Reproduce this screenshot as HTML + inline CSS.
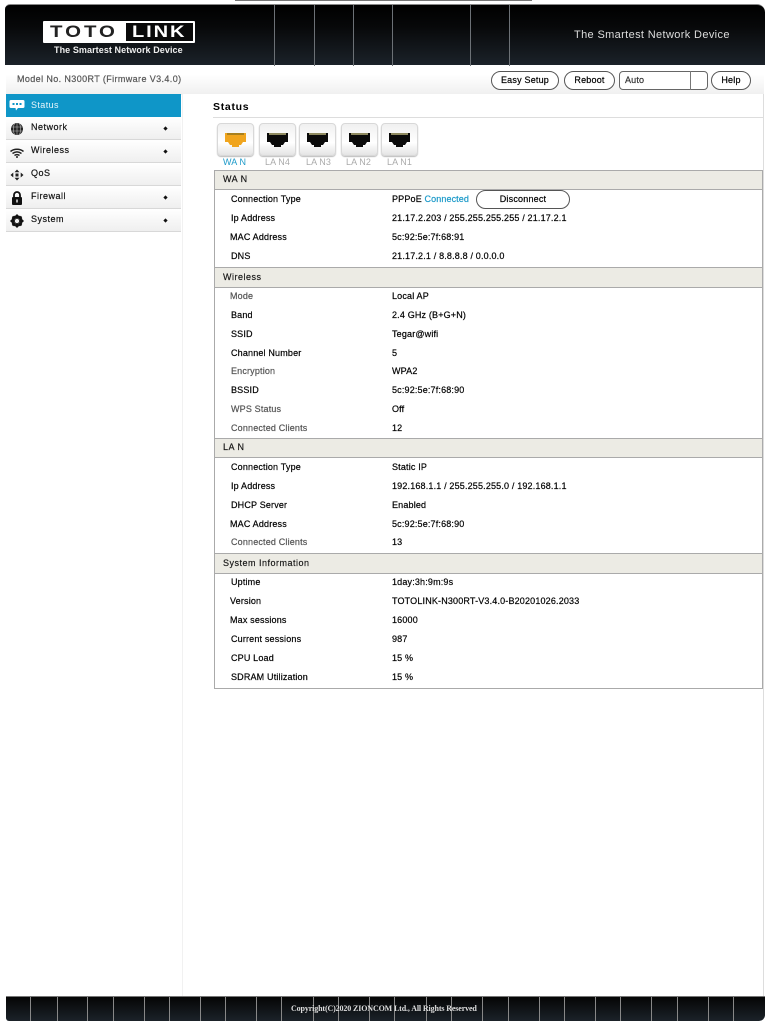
<!DOCTYPE html>
<html>
<head>
<meta charset="utf-8">
<title>TOTOLINK Status</title>
<style>
html,body{margin:0;padding:0;width:768px;height:1024px;overflow:hidden;background:#fff;}
body{position:relative;font-family:"Liberation Sans",Arial,sans-serif;font-size:9px;color:#000;}
.a{position:absolute;}
.t{position:absolute;white-space:nowrap;line-height:12px;height:12px;letter-spacing:.17px;filter:blur(.3px);-webkit-text-stroke:.2px currentColor;}
.g{color:#555;}
.v{position:absolute;width:1px;background:#6c7176;}
#hdr{left:5px;top:4px;width:760px;height:61px;background:linear-gradient(#000 0,#070809 35%,#1b2229 100%);border-radius:5px 8px 0 0;border-top:1px solid #888;box-sizing:border-box;}
#ftr{left:6px;top:996px;width:759px;height:25px;background:linear-gradient(#050505,#1b2229);border-radius:0 0 6px 3px;border-top:1px solid #777;box-sizing:border-box;}
.btn{position:absolute;height:19px;box-sizing:border-box;border:1px solid #555;border-radius:10px;background:#fff;text-align:center;line-height:16px;font-size:9px;letter-spacing:.2px;filter:blur(.3px);-webkit-text-stroke:.2px #000;}
.mi{position:absolute;left:6px;width:175px;height:22px;background:linear-gradient(#fff,#efefef);border-bottom:1px solid #d8d8d8;box-sizing:content-box;}
.mi .n{position:absolute;left:25px;top:3px;line-height:14px;letter-spacing:.5px;color:#111;filter:blur(.3px);-webkit-text-stroke:.2px currentColor;}
.mi .d{position:absolute;left:158px;top:10px;width:3px;height:3px;background:#111;transform:rotate(45deg);}
.mi svg{position:absolute;left:1px;top:2px;}
.port{position:absolute;top:123px;width:37px;height:33px;box-sizing:border-box;border:1px solid #d8d8d8;border-radius:4px;background:linear-gradient(#f0f0f0,#fff 60%,#e4e4e4);box-shadow:0 1px 1px #bbb;}
.port svg{position:absolute;left:7px;top:8px;}
.pl{position:absolute;top:156px;line-height:12px;font-size:9px;color:#aaa;letter-spacing:.1px;filter:blur(.3px);}
.sec{position:absolute;left:215px;width:547px;background:#ecebe4;border-top:1px solid #aaa;border-bottom:1px solid #aaa;box-sizing:border-box;}
.sec span{position:absolute;left:8px;top:50%;margin-top:-7px;line-height:12px;letter-spacing:.5px;color:#111;white-space:nowrap;filter:blur(.3px);-webkit-text-stroke:.15px #111;}
</style>
</head>
<body>
<div class="a" style="left:235px;top:0;width:297px;height:1px;background:#777;"></div>

<div class="a" id="hdr"></div>
<div class="v" style="left:274px;top:5px;height:61px;"></div>
<div class="v" style="left:314px;top:5px;height:61px;"></div>
<div class="v" style="left:353px;top:5px;height:61px;"></div>
<div class="v" style="left:392px;top:5px;height:61px;"></div>
<div class="v" style="left:470px;top:5px;height:61px;"></div>
<div class="v" style="left:509px;top:5px;height:61px;"></div>

<div class="a" style="left:43px;top:21px;width:152px;height:22px;background:#fff;border-radius:1px;"></div>
<div class="a" style="left:126px;top:23px;width:67px;height:18px;background:#0a0a0a;"></div>
<div class="a" style="left:50px;top:20px;line-height:24px;font-size:17px;font-weight:bold;color:#222;letter-spacing:2.5px;white-space:nowrap;transform:scaleX(1.2);transform-origin:left;">TOTO</div>
<div class="a" style="left:132px;top:20px;line-height:24px;font-size:17px;font-weight:bold;color:#fff;letter-spacing:1.6px;white-space:nowrap;transform:scaleX(1.18);transform-origin:left;">LINK</div>
<div class="t" style="left:54px;top:44px;color:#eee;font-weight:bold;font-size:9px;letter-spacing:.08px;-webkit-text-stroke:0;">The Smartest Network Device</div>
<div class="t" style="left:574px;top:29px;color:#ddd;font-size:11px;letter-spacing:.36px;-webkit-text-stroke:0;">The Smartest Network Device</div>

<div class="a" style="left:6px;top:66px;width:758px;height:28px;background:linear-gradient(#fff 30%,#f0f0f0);"></div>
<div class="t" style="left:17px;top:73px;color:#555;letter-spacing:.39px;">Model No. N300RT (Firmware V3.4.0)</div>
<div class="btn" style="left:491px;top:71px;width:68px;">Easy Setup</div>
<div class="btn" style="left:564px;top:71px;width:51px;line-height:17px;">Reboot</div>
<div class="a" style="left:619px;top:71px;width:89px;height:19px;box-sizing:border-box;border:1px solid #666;border-radius:4px;background:#fff;"></div>
<div class="a" style="left:690px;top:71px;width:1px;height:19px;background:#777;"></div>
<div class="t" style="left:625px;top:74px;color:#333;">Auto</div>
<div class="btn" style="left:711px;top:71px;width:40px;line-height:17px;">Help</div>

<div class="a" style="left:182px;top:94px;width:1px;height:902px;background:#f1f1f1;"></div>
<div class="a" style="left:763px;top:94px;width:1px;height:902px;background:#ddd;"></div>
<div class="a" style="left:6px;top:94px;width:176px;height:1px;background:#eee;"></div>

<div class="mi" style="top:94px;height:23px;background:#0f96c8;border:0;">
<svg width="20" height="18" viewBox="0 0 20 18"><path d="M4 4h12a1.500 1.500 0 0 1 1.500 1.500v5a1.500 1.500 0 0 1-1.500 1.500h-5l-2 2.500-.5-2.500H4a1.500 1.500 0 0 1-1.500-1.500v-5A1.500 1.500 0 0 1 4 4z" fill="#fff"/><rect x="5.500" y="7" width="2" height="2" fill="#0f96c8"/><rect x="9" y="7" width="2" height="2" fill="#0f96c8"/><rect x="12.500" y="7" width="2" height="2" fill="#0f96c8"/></svg>
<div class="n" style="color:#e8f6fb;top:4px;-webkit-text-stroke:0;letter-spacing:.4px;">Status</div></div>

<div class="mi" style="top:117px;">
<svg width="20" height="20" viewBox="0 0 20 20"><circle cx="10" cy="10" r="6" fill="#222"/><path d="M4 8h12M4 12h12M10 4v12M7.500 4.500c-1.500 3-1.500 8 0 11M12.500 4.500c1.500 3 1.500 8 0 11" stroke="#bbb" stroke-width=".6" fill="none"/></svg>
<div class="n">Network</div><div class="d"></div></div>

<div class="mi" style="top:140px;">
<svg width="20" height="20" viewBox="0 0 20 20"><path d="M3.500 9.500C7 6.500 13 6.500 16.500 9.500M5.500 11.500c3-2.200 6-2.200 9 0M7.500 13.500c1.700-1.200 3.300-1.200 5 0" stroke="#222" stroke-width="1.500" fill="none"/><circle cx="10" cy="15" r="1" fill="#222"/></svg>
<div class="n">Wireless</div><div class="d"></div></div>

<div class="mi" style="top:163px;">
<svg width="20" height="20" viewBox="0 0 20 20"><path d="M10 4.500l2.500 2.800h-5zM10 15.500l2.500-2.800h-5zM3.500 10l2.800-2.500v5zM16.500 10l-2.800-2.500v5z" fill="#222"/><rect x="8.500" y="8.500" width="3" height="3" fill="#222"/></svg>
<div class="n">QoS</div></div>

<div class="mi" style="top:186px;">
<svg width="20" height="20" viewBox="0 0 20 20"><rect x="5" y="9" width="10" height="8" rx="1" fill="#111"/><path d="M7 9.500V7a3 3 0 0 1 6 0v2.500" stroke="#111" stroke-width="1.800" fill="none"/><rect x="9.200" y="11.500" width="1.600" height="3" fill="#ddd"/></svg>
<div class="n">Firewall</div><div class="d"></div></div>

<div class="mi" style="top:209px;">
<svg width="20" height="20" viewBox="0 0 20 20"><circle cx="10" cy="10" r="4.500" fill="none" stroke="#111" stroke-width="2.400"/><path d="M10 3.500v13M3.500 10h13M5.500 5.500l9 9M14.500 5.500l-9 9" stroke="#111" stroke-width="2"/><circle cx="10" cy="10" r="2.200" fill="#eee"/></svg>
<div class="n">System</div><div class="d"></div></div>

<div class="t" style="left:213px;top:101px;font-weight:bold;font-size:10.500px;letter-spacing:.7px;-webkit-text-stroke:0;">Status</div>
<div class="a" style="left:213px;top:117px;width:550px;height:1px;background:#ddd;"></div>

<div class="port" style="left:217px;"><svg width="21" height="16" viewBox="0 0 21 16"><path d="M0 1h21v9h-3l-2 3h-2v2H7v-2H5l-2-3H0z" fill="#f0a51e"/><rect x="2" y="1" width="17" height="2" fill="#a8801e"/></svg></div>
<div class="port" style="left:259px;"><svg width="21" height="16" viewBox="0 0 21 16"><path d="M0 1h21v9h-3l-2 3h-2v2H7v-2H5l-2-3H0z" fill="#0a0a0a"/><rect x="2" y="1" width="17" height="2" fill="#8f8a60"/></svg></div>
<div class="port" style="left:299px;"><svg width="21" height="16" viewBox="0 0 21 16"><path d="M0 1h21v9h-3l-2 3h-2v2H7v-2H5l-2-3H0z" fill="#0a0a0a"/><rect x="2" y="1" width="17" height="2" fill="#8f8a60"/></svg></div>
<div class="port" style="left:341px;"><svg width="21" height="16" viewBox="0 0 21 16"><path d="M0 1h21v9h-3l-2 3h-2v2H7v-2H5l-2-3H0z" fill="#0a0a0a"/><rect x="2" y="1" width="17" height="2" fill="#8f8a60"/></svg></div>
<div class="port" style="left:381px;"><svg width="21" height="16" viewBox="0 0 21 16"><path d="M0 1h21v9h-3l-2 3h-2v2H7v-2H5l-2-3H0z" fill="#0a0a0a"/><rect x="2" y="1" width="17" height="2" fill="#8f8a60"/></svg></div>
<div class="pl" style="left:223px;color:#1d9ac9;">WA N</div>
<div class="pl" style="left:265px;">LA N4</div>
<div class="pl" style="left:306px;">LA N3</div>
<div class="pl" style="left:346px;">LA N2</div>
<div class="pl" style="left:387px;">LA N1</div>

<div class="a" style="left:214px;top:170px;width:549px;height:519px;box-sizing:border-box;border:1px solid #aaa;"></div>
<div class="sec" style="top:170px;height:20px;"><span>WA N</span></div>
<div class="sec" style="top:267px;height:21px;"><span>Wireless</span></div>
<div class="sec" style="top:438px;height:20px;"><span>LA N</span></div>
<div class="sec" style="top:553px;height:21px;"><span>System Information</span></div>

<div class="t" style="left:231px;top:193px;">Connection Type</div>
<div class="t" style="left:392px;top:193px;">PPPoE <span style="color:#1d9ac9;letter-spacing:.1px;">Connected</span></div>
<div class="btn" style="left:476px;top:190px;width:94px;line-height:17px;">Disconnect</div>
<div class="t" style="left:231px;top:212px;">Ip Address</div>
<div class="t" style="left:392px;top:212px;">21.17.2.203 / 255.255.255.255 / 21.17.2.1</div>
<div class="t" style="left:230px;top:231px;">MAC Address</div>
<div class="t" style="left:392px;top:231px;">5c:92:5e:7f:68:91</div>
<div class="t" style="left:231px;top:250px;">DNS</div>
<div class="t" style="left:392px;top:250px;">21.17.2.1 / 8.8.8.8 / 0.0.0.0</div>

<div class="t g" style="left:230px;top:290px;">Mode</div>
<div class="t" style="left:392px;top:290px;">Local AP</div>
<div class="t" style="left:231px;top:309px;">Band</div>
<div class="t" style="left:392px;top:309px;">2.4 GHz (B+G+N)</div>
<div class="t" style="left:231px;top:328px;">SSID</div>
<div class="t" style="left:392px;top:328px;">Tegar@wifi</div>
<div class="t" style="left:231px;top:347px;">Channel Number</div>
<div class="t" style="left:392px;top:347px;">5</div>
<div class="t g" style="left:231px;top:365px;">Encryption</div>
<div class="t" style="left:392px;top:365px;">WPA2</div>
<div class="t" style="left:231px;top:384px;">BSSID</div>
<div class="t" style="left:392px;top:384px;">5c:92:5e:7f:68:90</div>
<div class="t g" style="left:231px;top:403px;">WPS Status</div>
<div class="t" style="left:392px;top:403px;">Off</div>
<div class="t g" style="left:231px;top:422px;">Connected Clients</div>
<div class="t" style="left:392px;top:422px;">12</div>

<div class="t" style="left:231px;top:461px;">Connection Type</div>
<div class="t" style="left:392px;top:461px;">Static IP</div>
<div class="t" style="left:231px;top:480px;">Ip Address</div>
<div class="t" style="left:392px;top:480px;">192.168.1.1 / 255.255.255.0 / 192.168.1.1</div>
<div class="t" style="left:231px;top:499px;">DHCP Server</div>
<div class="t" style="left:392px;top:499px;">Enabled</div>
<div class="t" style="left:230px;top:518px;">MAC Address</div>
<div class="t" style="left:392px;top:518px;">5c:92:5e:7f:68:90</div>
<div class="t g" style="left:231px;top:536px;">Connected Clients</div>
<div class="t" style="left:392px;top:536px;">13</div>

<div class="t" style="left:231px;top:576px;">Uptime</div>
<div class="t" style="left:392px;top:576px;">1day:3h:9m:9s</div>
<div class="t" style="left:230px;top:595px;">Version</div>
<div class="t" style="left:392px;top:595px;">TOTOLINK-N300RT-V3.4.0-B20201026.2033</div>
<div class="t" style="left:230px;top:614px;">Max sessions</div>
<div class="t" style="left:392px;top:614px;">16000</div>
<div class="t" style="left:231px;top:633px;">Current sessions</div>
<div class="t" style="left:392px;top:633px;">987</div>
<div class="t" style="left:231px;top:652px;">CPU Load</div>
<div class="t" style="left:392px;top:652px;">15 %</div>
<div class="t" style="left:231px;top:671px;">SDRAM Utilization</div>
<div class="t" style="left:392px;top:671px;">15 %</div>

<div class="a" id="ftr"></div>
<div class="v" style="left:30px;top:997px;height:24px;background:#888;"></div>
<div class="v" style="left:57px;top:997px;height:24px;background:#888;"></div>
<div class="v" style="left:87px;top:997px;height:24px;background:#888;"></div>
<div class="v" style="left:113px;top:997px;height:24px;background:#888;"></div>
<div class="v" style="left:144px;top:997px;height:24px;background:#888;"></div>
<div class="v" style="left:169px;top:997px;height:24px;background:#888;"></div>
<div class="v" style="left:200px;top:997px;height:24px;background:#888;"></div>
<div class="v" style="left:225px;top:997px;height:24px;background:#888;"></div>
<div class="v" style="left:256px;top:997px;height:24px;background:#888;"></div>
<div class="v" style="left:281px;top:997px;height:24px;background:#888;"></div>
<div class="v" style="left:313px;top:997px;height:24px;background:#888;"></div>
<div class="v" style="left:338px;top:997px;height:24px;background:#888;"></div>
<div class="v" style="left:369px;top:997px;height:24px;background:#888;"></div>
<div class="v" style="left:394px;top:997px;height:24px;background:#888;"></div>
<div class="v" style="left:426px;top:997px;height:24px;background:#888;"></div>
<div class="v" style="left:451px;top:997px;height:24px;background:#888;"></div>
<div class="v" style="left:482px;top:997px;height:24px;background:#888;"></div>
<div class="v" style="left:508px;top:997px;height:24px;background:#888;"></div>
<div class="v" style="left:539px;top:997px;height:24px;background:#888;"></div>
<div class="v" style="left:564px;top:997px;height:24px;background:#888;"></div>
<div class="v" style="left:595px;top:997px;height:24px;background:#888;"></div>
<div class="v" style="left:620px;top:997px;height:24px;background:#888;"></div>
<div class="v" style="left:651px;top:997px;height:24px;background:#888;"></div>
<div class="v" style="left:677px;top:997px;height:24px;background:#888;"></div>
<div class="v" style="left:708px;top:997px;height:24px;background:#888;"></div>
<div class="v" style="left:733px;top:997px;height:24px;background:#888;"></div>
<div class="t" style="left:291px;top:1003px;font-family:'Liberation Serif',serif;font-size:8px;font-weight:bold;color:#ddd;letter-spacing:-.13px;-webkit-text-stroke:0;">Copyright(C)2020 ZIONCOM Ltd., All Rights Reserved</div>
</body>
</html>
